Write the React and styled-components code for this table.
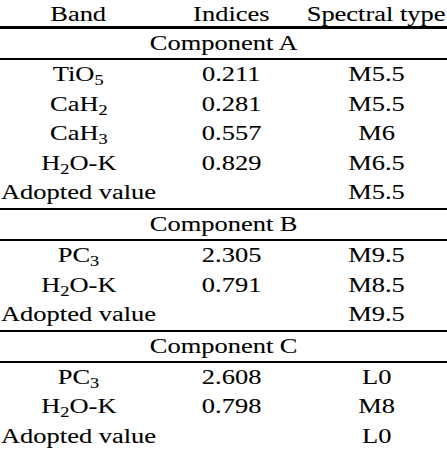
import styled, { createGlobalStyle } from "styled-components";

const GlobalStyle = createGlobalStyle`
  html, body {
    margin: 0;
    padding: 0;
    background: #fff;
  }
  body {
    width: 447px;
    height: 450px;
    overflow: hidden;
    color: #000;
  }
`;

const groups = [
  {
    title: "Component A",
    rows: [
      { band: ["TiO", "5"], index: "0.211", type: "M5.5" },
      { band: ["CaH", "2"], index: "0.281", type: "M5.5" },
      { band: ["CaH", "3"], index: "0.557", type: "M6" },
      { band: ["H", "2", "O-K"], index: "0.829", type: "M6.5" },
      { band: ["Adopted value"], index: "", type: "M5.5" },
    ],
  },
  {
    title: "Component B",
    rows: [
      { band: ["PC", "3"], index: "2.305", type: "M9.5" },
      { band: ["H", "2", "O-K"], index: "0.791", type: "M8.5" },
      { band: ["Adopted value"], index: "", type: "M9.5" },
    ],
  },
  {
    title: "Component C",
    rows: [
      { band: ["PC", "3"], index: "2.608", type: "L0" },
      { band: ["H", "2", "O-K"], index: "0.798", type: "M8" },
      { band: ["Adopted value"], index: "", type: "L0" },
    ],
  },
];

const Band = ({ parts }) => (
  <>
    {parts[0]}
    {parts[1] && <Sub>{parts[1]}</Sub>}
    {parts[2]}
  </>
);

const App = () => {
  return (
    <>
      <GlobalStyle />
      <Table>
        <HeadRow>
          <Cell><Txt>Band</Txt></Cell>
          <Cell><Txt>Indices</Txt></Cell>
          <Cell><Txt>Spectral type</Txt></Cell>
        </HeadRow>
        <Rule $w={3} />
        {groups.map((g, gi) => (
          <Group key={gi}>
            {gi > 0 && <Rule $w={2} />}
            <GroupTitle><Txt>{g.title}</Txt></GroupTitle>
            <Rule $w={2} />
            {g.rows.map((r, ri) => (
              <Row key={ri}>
                <Cell><Txt><Band parts={r.band} /></Txt></Cell>
                <Cell><Txt>{r.index}</Txt></Cell>
                <Cell><Txt>{r.type}</Txt></Cell>
              </Row>
            ))}
          </Group>
        ))}
      </Table>
    </>
  );
};

export default App;

const Table = styled.div`
  display: flex;
  flex-direction: column;
  width: 447px;
  font-family: "Liberation Serif", "Times New Roman", Times, serif;
  color: #000;
  -webkit-text-stroke: 0.1px #000;
`;

const Group = styled.div`
  display: flex;
  flex-direction: column;
`;

const Row = styled.div`
  display: grid;
  grid-template-columns: 157px 149px 141px;
  align-items: center;
  height: 29.6px;
  font-size: 21px;
  line-height: 29.6px;
`;

const HeadRow = styled(Row)`
  height: 26px;
  align-items: end;
`;

const Cell = styled.div`
  text-align: center;
  white-space: nowrap;
`;

const Txt = styled.span`
  display: inline-block;
  transform: scaleX(1.26);
`;

const Sub = styled.sub`
  font-size: 14.5px;
  line-height: 0;
  vertical-align: -4px;
`;

const GroupTitle = styled.div`
  height: 29px;
  display: flex;
  align-items: center;
  justify-content: center;
  font-size: 21px;
  line-height: 29px;
  white-space: nowrap;
`;

const Rule = styled.div`
  height: ${(p) => p.$w}px;
  background: #000;
`;
